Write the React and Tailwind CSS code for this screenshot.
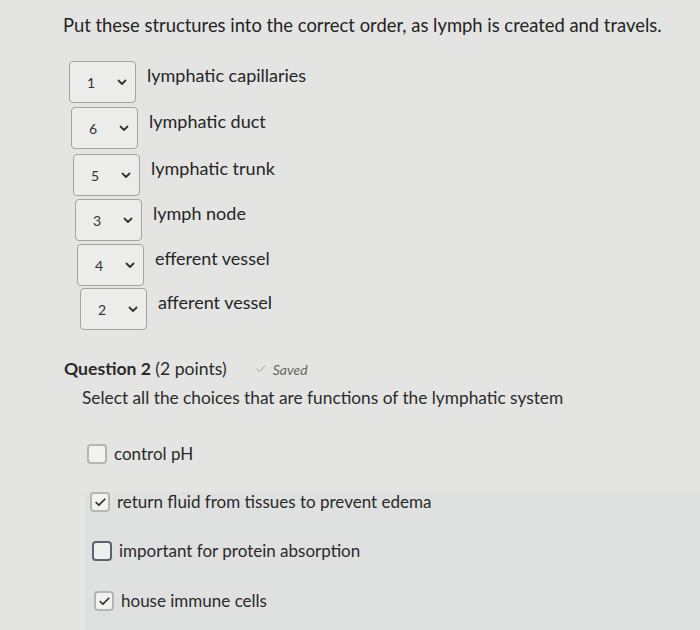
import { Check } from 'lucide-react';

const ORDER = [
  { value: 1, label: 'lymphatic capillaries', shift: 'ml-0', top: 'mt-0' },
  { value: 6, label: 'lymphatic duct', shift: 'ml-[2px]', top: 'mt-[4px]' },
  { value: 5, label: 'lymphatic trunk', shift: 'ml-[4px]', top: 'mt-[5px]' },
  { value: 3, label: 'lymph node', shift: 'ml-[6px]', top: 'mt-[3px]' },
  { value: 4, label: 'efferent vessel', shift: 'ml-[8px]', top: 'mt-[3px]' },
  { value: 2, label: 'afferent vessel', shift: 'ml-[11px]', top: 'mt-[2px]' },
];

// first choice sits outside the shaded panel, the rest inside it
const FIRST = { label: 'control pH', checked: false, shift: 'ml-[87px]', gap: 'mt-0' };
const PANEL_CHOICES = [
  { label: 'return fluid from tissues to prevent edema', checked: true, shift: 'ml-[5px]', gap: 'mt-[28px]' },
  { label: 'important for protein absorption', checked: false, focus: true, shift: 'ml-[7px]', gap: 'mt-[29px]' },
  { label: 'house immune cells', checked: true, shift: 'ml-[9px]', gap: 'mt-[30px]' },
];

function Chevron() {
  return (
    <svg width="10" height="7" viewBox="0 0 10 7" fill="none">
      <path d="M1.5 1.5 L5 5 L8.5 1.5" stroke="#333" strokeWidth="1.8" strokeLinecap="round" strokeLinejoin="round" />
    </svg>
  );
}

function OrderRow({ value, label, shift, top }) {
  return (
    <div className={`flex items-start ${shift} ${top}`}>
      <div className="w-[67px] h-[42px] shrink-0 rounded-[4px] border border-[#a3a3a1] bg-[#ececea] flex items-center pl-[17px] gap-[20px] text-[14px] text-[#333]">
        <span className="w-[10px]">{value}</span>
        <Chevron />
      </div>
      <span className="ml-[11px] mt-[3px] text-[18px] leading-[22px] text-[#262626]">{label}</span>
    </div>
  );
}

function Choice({ label, checked, focus, shift, gap }) {
  return (
    <div className={`flex items-center ${shift} ${gap}`}>
      <div
        className={`w-[20px] h-[20px] rounded-[4px] border-2 flex items-center justify-center ${
          focus ? 'border-[#5a6470] bg-[#eef0f0]' : 'border-[#b4b6b6] bg-[#f2f2f0]'
        }`}
      >
        {checked && <Check size={13} strokeWidth={3.2} color="#333" />}
      </div>
      <span className="ml-[7px] text-[17px] leading-[20px] text-[#2a2a2a]">{label}</span>
    </div>
  );
}

export default function App() {
  return (
    <div className="w-[700px] h-[630px] overflow-hidden bg-[#e4e4e2] font-['Lato','Noto_Sans',sans-serif]">
      <div className="pt-[13px] pl-[63px] text-[18.4px] leading-[24px] text-[#232323]">
        Put these structures into the correct order, as lymph is created and travels.
      </div>

      <div className="mt-[24px] pl-[69px]">
        {ORDER.map((o) => (
          <OrderRow key={o.label} {...o} />
        ))}
      </div>

      <div className="mt-[28px] pl-[64px] flex items-center">
        <span className="text-[17.6px] leading-[22px] font-bold text-[#2a2a2a]">
          Question 2 <span className="font-normal">(2 points)</span>
        </span>
        <span className="ml-[28px] flex items-center gap-[6px] text-[14px] italic text-[#666]">
          <Check size={12} strokeWidth={2} color="#9aa0a4" />
          Saved
        </span>
      </div>
      <div className="mt-[7px] pl-[82px] text-[17.3px] leading-[22px] text-[#2b2b2b]">
        Select all the choices that are functions of the lymphatic system
      </div>

      <div className="mt-[35px]">
        <Choice {...FIRST} />
        <div className="ml-[85px] bg-[#dfe1e0] pb-[30px]">
          {PANEL_CHOICES.map((c) => (
            <Choice key={c.label} {...c} />
          ))}
        </div>
      </div>
    </div>
  );
}
